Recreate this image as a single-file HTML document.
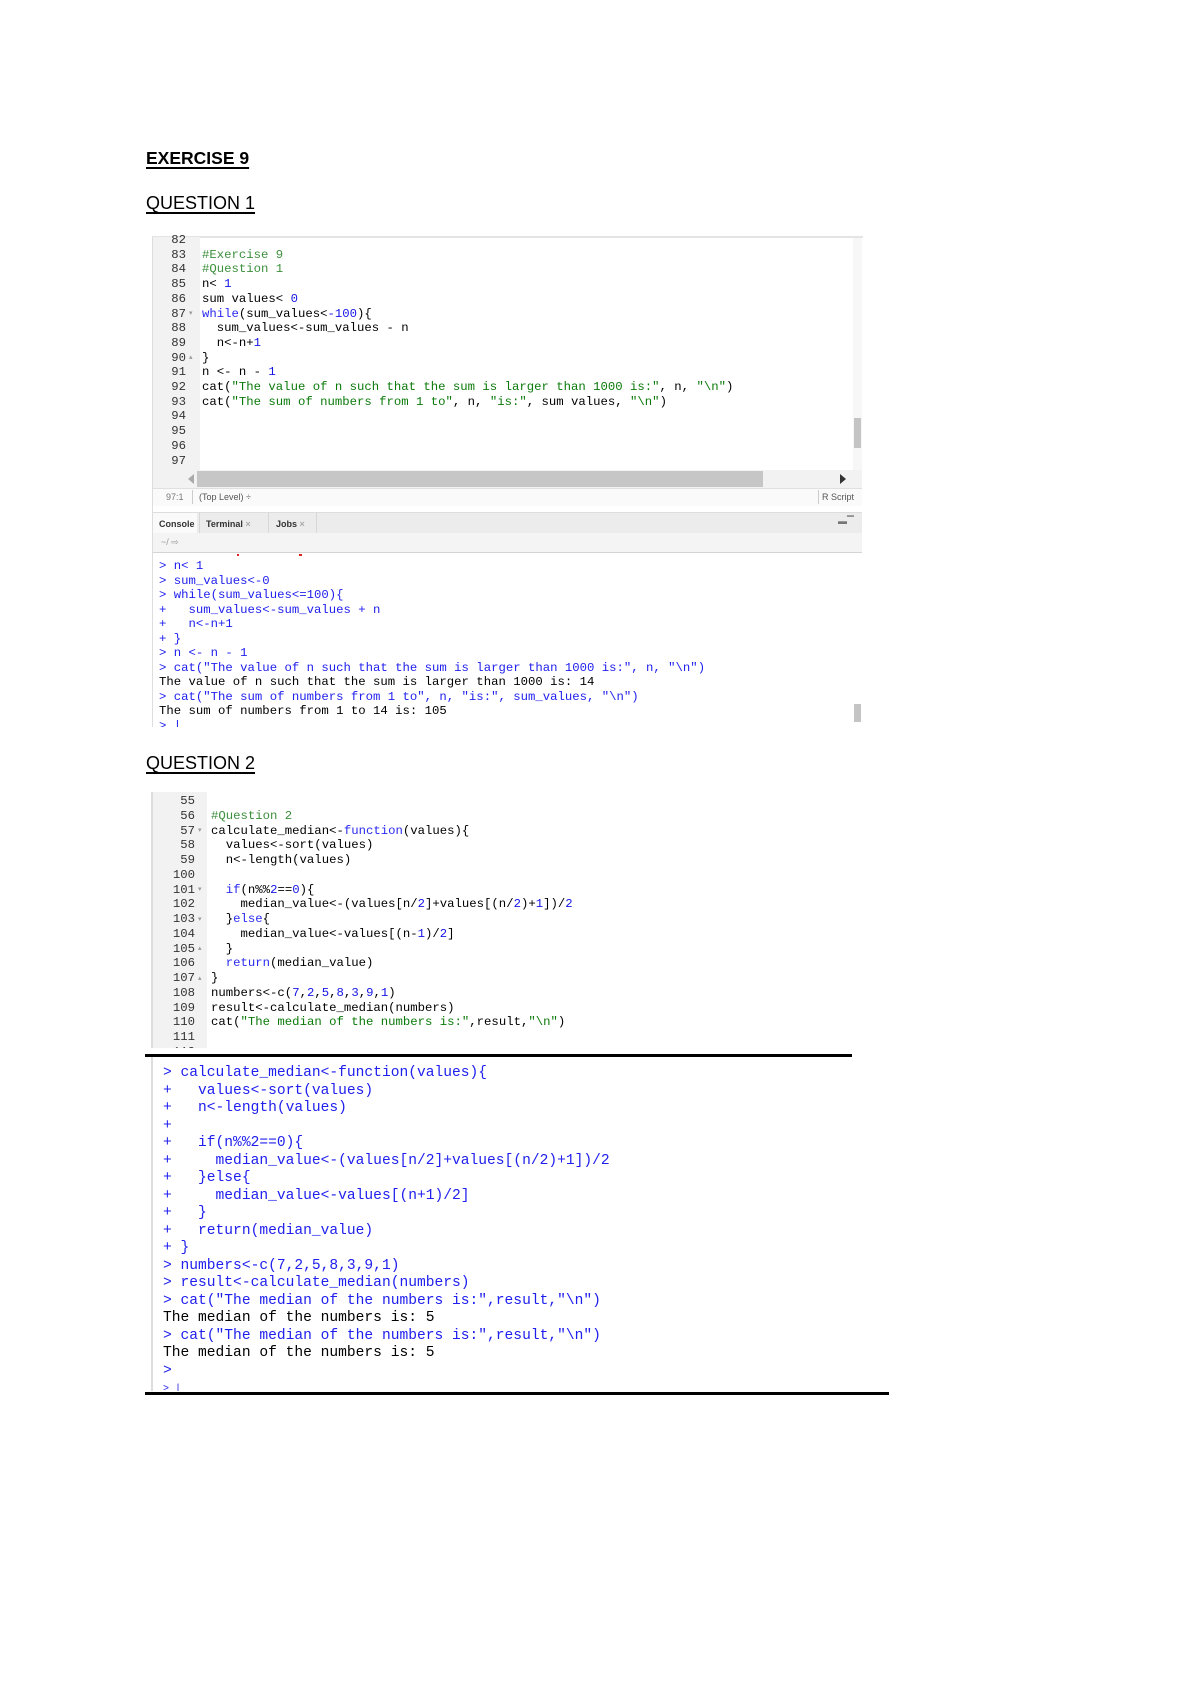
<!DOCTYPE html>
<html><head><meta charset="utf-8"><style>
*{margin:0;padding:0;box-sizing:border-box}
body{width:1200px;height:1696px;background:#fff;position:relative;overflow:hidden;font-family:"Liberation Sans",sans-serif}
.h{position:absolute;left:146px;font-size:18px;color:#000;line-height:20px;text-decoration:underline;text-decoration-thickness:2px;text-underline-offset:3px}
.a{position:absolute}
.m{font-family:"Liberation Mono",monospace;white-space:pre;position:absolute;font-size:12.3px;line-height:14.7px}
.n{color:#333;text-align:right;width:36px}
.g{color:#3c8f3c}.s{color:#0a7a0a}.b{color:#1515e6}.k{color:#2a2af0}
.c{color:#2020ee}.o{color:#000}
.c2{font-family:"Liberation Mono",monospace;white-space:pre;position:absolute;font-size:14.6px;line-height:17.5px;color:#2020ee}
.t{font-size:9px;color:#333;position:absolute}
.f{position:absolute;font-size:7px;color:#999;line-height:8px}
</style></head><body>
<div class="h" style="top:148px;font-weight:bold;font-size:17.5px">EXERCISE 9</div>
<div class="h" style="top:193px">QUESTION 1</div>

<div class="a" style="left:152px;top:236px;width:711px;height:491px;border-left:1px solid #ddd;border-top:2px solid #e4e4e4"></div>
<div class="a" style="left:153px;top:237px;width:47px;height:233px;background:#f2f2f2"></div>
<div class="a" style="left:853px;top:238px;width:9px;height:232px;background:#f7f7f7"></div>
<div class="a" style="left:854px;top:418px;width:7px;height:30px;background:#c4c4c4"></div>
<div class="a" style="left:153px;top:470px;width:709px;height:18px;background:#f2f2f2"></div>
<div class="a" style="left:197px;top:471px;width:566px;height:16px;background:#c6c6c6"></div>
<div class="a" style="left:188px;top:474px;width:0;height:0;border-top:5px solid transparent;border-bottom:5px solid transparent;border-right:6px solid #aaa"></div>
<div class="a" style="left:840px;top:474px;width:0;height:0;border-top:5px solid transparent;border-bottom:5px solid transparent;border-left:6px solid #333"></div>
<div class="a" style="left:153px;top:488px;width:709px;height:18px;background:#fafafa;border-top:1px solid #e0e0e0"></div>
<div class="t" style="left:166px;top:492px;color:#777">97:1</div>
<div class="a" style="left:192px;top:490px;width:1px;height:14px;background:#ccc"></div>
<div class="t" style="left:199px;top:492px;color:#555">(Top Level) ÷</div>
<div class="a" style="left:818px;top:490px;width:1px;height:14px;background:#ccc"></div>
<div class="t" style="left:822px;top:492px;color:#555">R Script</div>
<div class="a" style="left:153px;top:512px;width:709px;height:21px;background:#ececec;border-top:1px solid #ddd"></div>
<div class="a" style="left:153px;top:513px;width:44px;height:21px;background:#fafafa"></div>
<div class="t" style="left:159px;top:519px;font-weight:bold">Console</div>
<div class="a" style="left:199px;top:513px;width:70px;height:20px;border-left:1px solid #d8d8d8;border-right:1px solid #d8d8d8"></div>
<div class="t" style="left:206px;top:519px;font-weight:bold">Terminal <span style="color:#aaa">×</span></div>
<div class="a" style="left:269px;top:513px;width:48px;height:20px;border-right:1px solid #d8d8d8"></div>
<div class="t" style="left:276px;top:519px;font-weight:bold">Jobs <span style="color:#aaa">×</span></div>
<div class="t" style="left:838px;top:516px;color:#777">▬▔</div>
<div class="a" style="left:153px;top:533px;width:709px;height:20px;background:#f4f4f4;border-bottom:1px solid #d4d4d4"></div>
<div class="t" style="left:161px;top:537px;color:#999">~/ ⇨</div>
<div class="a" style="left:237px;top:554px;width:2px;height:2px;background:#d22"></div>
<div class="a" style="left:299px;top:554px;width:3px;height:2px;background:#d22"></div>
<div class="a" style="left:854px;top:704px;width:7px;height:18px;background:#c4c4c4"></div>

<div class="m n" style="left:150px;top:233px">82
83
84
85
86
87
88
89
90
91
92
93
94
95
96
97</div>
<div class="f" style="left:189px;top:310px">▾</div>
<div class="f" style="left:189px;top:354px">▴</div>
<div class="m o" style="left:202px;top:233px">
<span class="g">#Exercise 9</span>
<span class="g">#Question 1</span>
n< <span class="b">1</span>
sum values< <span class="b">0</span>
<span class="k">while</span>(sum_values<<span class="b">-100</span>){
  sum_values<-sum_values - n
  n<-n+<span class="b">1</span>
}
n <- n - <span class="b">1</span>
cat(<span class="s">"The value of n such that the sum is larger than 1000 is:"</span>, n, <span class="s">"\n"</span>)
cat(<span class="s">"The sum of numbers from 1 to"</span>, n, <span class="s">"is:"</span>, sum values, <span class="s">"\n"</span>)</div>

<div class="m c" style="left:159px;top:559px;line-height:14.5px">> n< 1
> sum_values<-0
> while(sum_values<=100){
+   sum_values<-sum_values + n
+   n<-n+1
+ }
> n <- n - 1
> cat("The value of n such that the sum is larger than 1000 is:", n, "\n")
<span class="o">The value of n such that the sum is larger than 1000 is: 14</span>
> cat("The sum of numbers from 1 to", n, "is:", sum_values, "\n")
<span class="o">The sum of numbers from 1 to 14 is: 105</span>
> |</div>
<div class="a" style="left:150px;top:727px;width:720px;height:10px;background:#fff"></div>

<div class="h" style="top:753px">QUESTION 2</div>

<div class="a" style="left:151px;top:792px;width:2px;height:262px;background:#ddd"></div>
<div class="a" style="left:153px;top:792px;width:54px;height:262px;background:#f2f2f2"></div>
<div class="m n" style="left:159px;top:794px;line-height:14.75px">55
56
57
58
59
100
101
102
103
104
105
106
107
108
109
110
111
112</div>
<div class="f" style="left:198px;top:827px">▾</div>
<div class="f" style="left:198px;top:886px">▾</div>
<div class="f" style="left:198px;top:916px">▾</div>
<div class="f" style="left:198px;top:945px">▴</div>
<div class="f" style="left:198px;top:975px">▴</div>
<div class="m o" style="left:211px;top:794px;line-height:14.75px">
<span class="g">#Question 2</span>
calculate_median<-<span class="k">function</span>(values){
  values<-sort(values)
  n<-length(values)

  <span class="k">if</span>(n%%<span class="b">2</span>==<span class="b">0</span>){
    median_value<-(values[n/<span class="b">2</span>]+values[(n/<span class="b">2</span>)+<span class="b">1</span>])/<span class="b">2</span>
  }<span class="k">else</span>{
    median_value<-values[(n-<span class="b">1</span>)/<span class="b">2</span>]
  }
  <span class="k">return</span>(median_value)
}
numbers<-c(<span class="b">7</span>,<span class="b">2</span>,<span class="b">5</span>,<span class="b">8</span>,<span class="b">3</span>,<span class="b">9</span>,<span class="b">1</span>)
result<-calculate_median(numbers)
cat(<span class="s">"The median of the numbers is:"</span>,result,<span class="s">"\n"</span>)</div>
<div class="a" style="left:140px;top:1048px;width:720px;height:6px;background:#fff"></div>
<div class="a" style="left:145px;top:1054px;width:707px;height:3px;background:#000"></div>

<div class="a" style="left:151px;top:1057px;width:2px;height:334px;background:#ddd"></div>
<div class="c2" style="left:163px;top:1065px">> calculate_median<-function(values){
+   values<-sort(values)
+   n<-length(values)
+
+   if(n%%2==0){
+     median_value<-(values[n/2]+values[(n/2)+1])/2
+   }else{
+     median_value<-values[(n+1)/2]
+   }
+   return(median_value)
+ }
> numbers<-c(7,2,5,8,3,9,1)
> result<-calculate_median(numbers)
> cat("The median of the numbers is:",result,"\n")
<span style="color:#000">The median of the numbers is: 5</span>
> cat("The median of the numbers is:",result,"\n")
<span style="color:#000">The median of the numbers is: 5</span>
>
<span style="font-size:10px">&gt; |</span></div>
<div class="a" style="left:140px;top:1391px;width:760px;height:40px;background:#fff"></div>
<div class="a" style="left:145px;top:1392px;width:744px;height:3px;background:#000"></div>
</body></html>
